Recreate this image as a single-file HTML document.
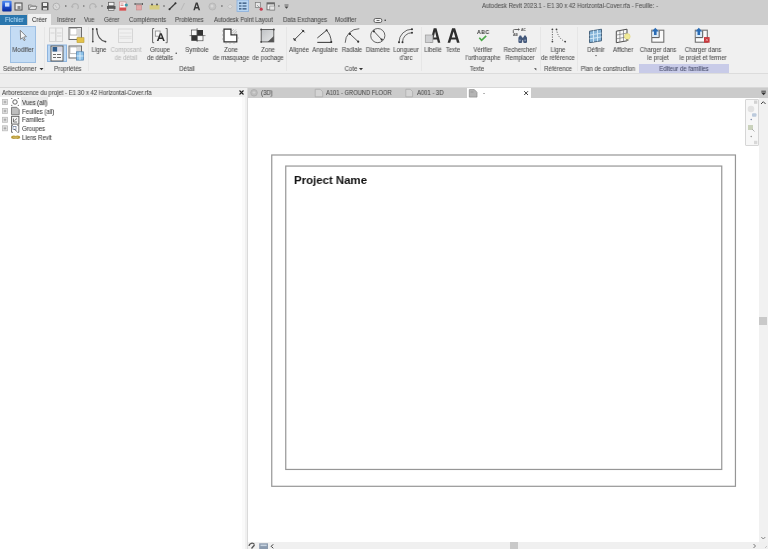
<!DOCTYPE html>
<html><head><meta charset="utf-8">
<style>
*{margin:0;padding:0;box-sizing:border-box}
html,body{width:768px;height:549px;overflow:hidden;background:#fff}
body{position:relative;font-family:"Liberation Sans",sans-serif;font-size:6px;color:#4a4a4a}
.a{position:absolute}
.t{position:absolute;white-space:nowrap;will-change:transform;-webkit-text-stroke:0.06px currentColor;line-height:8px;font-size:6.4px;transform:scaleX(.94);transform-origin:0 50%}
.c{transform:translateX(-50%) scaleX(.94);transform-origin:50% 50%}
svg{position:absolute;overflow:visible}
</style></head><body>
<!-- title bar -->
<div class="a" style="left:0;top:0;width:768px;height:25px;background:#cdcdcd"></div>
<div class="t" style="left:481.5px;top:1.5px;color:#505050;transform:scaleX(.93)">Autodesk Revit 2023.1 - E1 30 x 42 Horizontal-Cover.rfa - Feuille: -</div>


<!-- QAT -->
<svg style="left:0;top:0" width="1" height="1">
 <defs><linearGradient id="rv" x1="0" y1="0" x2="0" y2="1"><stop offset="0" stop-color="#4f8cf0"/><stop offset="0.5" stop-color="#1d4fd0"/><stop offset="1" stop-color="#0a2a9a"/></linearGradient></defs>
 <rect x="2.2" y="0.8" width="9.4" height="10.8" rx="1" fill="url(#rv)"/>
 <rect x="5" y="2.6" width="4.4" height="4" fill="#c8dcff"/>
 <rect x="15" y="3" width="7" height="7" fill="#e8e8e8" stroke="#555" stroke-width="1.1"/>
 <rect x="17.5" y="6" width="3" height="3" fill="#888"/>
 <path d="M28.5 5 h3 l1 1 h3.5 v3.5 h-7.5z" fill="#d0d0d0" stroke="#777" stroke-width="0.8"/>
 <path d="M29 9.5 l1.5 -3 h6.5 l-1.5 3z" fill="#e6e6e6" stroke="#777" stroke-width="0.7"/>
 <rect x="41.5" y="2.3" width="7" height="8" rx="0.6" fill="#555"/>
 <rect x="43" y="3" width="4" height="3" fill="#f0f0f0"/><rect x="43" y="7.8" width="4" height="2" fill="#e0e0e0"/>
 <circle cx="56.3" cy="6.5" r="3.3" fill="#d8d8d8" stroke="#b0b0b0" stroke-width="1"/><path d="M55 5l2 3" stroke="#bbb" stroke-width="0.8"/>
 <circle cx="65.8" cy="6" r="0.8" fill="#555"/>
 <path d="M72 7 a3.2 3.2 0 1 1 5.5 2" fill="none" stroke="#b4b4b4" stroke-width="1.2"/><path d="M70.8 6 l1.4 2.2 l1.8 -1.8z" fill="#b4b4b4"/>
 <circle cx="83.8" cy="6" r="0.8" fill="#666"/>
 <path d="M96 7 a3.2 3.2 0 1 0 -5.5 2" fill="none" stroke="#b4b4b4" stroke-width="1.2"/><path d="M97.2 6 l-1.4 2.2 l-1.8 -1.8z" fill="#b4b4b4"/>
 <circle cx="102" cy="6" r="0.8" fill="#666"/>
 <path d="M107 6 h8.5 v3 h-8.5z" fill="#555"/>
 <rect x="108.5" y="2.3" width="5.5" height="3.5" fill="#f4f4f4" stroke="#555" stroke-width="0.7"/>
 <rect x="108.5" y="8.5" width="5.5" height="1.8" fill="#e8e8e8" stroke="#555" stroke-width="0.6"/>
 <rect x="119.5" y="2" width="6.5" height="8.5" fill="#fafafa" stroke="#d08080" stroke-width="0.6"/><path d="M120.5 4h3M120.5 5.5h3" stroke="#c05050" stroke-width="0.6"/>
 <rect x="119.5" y="7.5" width="6.5" height="3" fill="#d65050"/>
 <circle cx="126.3" cy="5" r="1.6" fill="#3c9aa8"/>
 <path d="M135 3 v2 M142.5 3 v2 M135 4 h7.5" stroke="#555" stroke-width="0.9"/>
 <rect x="136.5" y="5" width="5" height="5" fill="#e4a8a8" stroke="#c08080" stroke-width="0.5"/>
 <path d="M149.5 5 h10 v4.5 h-10z" fill="#d6cc80"/>
 <circle cx="152" cy="4.5" r="1" fill="#555"/><circle cx="157" cy="4.5" r="1" fill="#555"/>
 <circle cx="164" cy="6" r="0.8" fill="#555"/>
 <path d="M169.2 9.5 L175.8 3" stroke="#3c3c3c" stroke-width="1.2"/>
 <circle cx="169.5" cy="9.3" r="1" fill="#333"/><circle cx="175.5" cy="3.3" r="1" fill="#333"/>
 <path d="M181 10 L184.5 3" stroke="#b8b8b8" stroke-width="1"/>
 <path d="M193.3 10.2 L195.8 2.6 H197.6 L200.1 10.2 H198.5 L198 8.4 H195.4 L194.9 10.2 Z M195.8 7.1 H197.6 L196.7 4.3 Z" fill="#383838" fill-rule="evenodd"/>
 <circle cx="212.4" cy="6.5" r="3.5" fill="#c4c4c4" stroke="#b4b4b4" stroke-width="0.8"/><circle cx="212" cy="6" r="1.5" fill="#d8d8d8"/>
 <circle cx="221.9" cy="6" r="0.8" fill="#555"/>
 <path d="M227.8 6.5 L230.2 4 L232.6 6.5 L230.2 9z" fill="#dadada" stroke="#bdbdbd" stroke-width="0.8"/>
 <rect x="237" y="0" width="11.6" height="11.5" fill="#b9d6f2" stroke="#8ab0dc" stroke-width="0.8"/>
 <path d="M239 3.2h2.5M242.5 3.2h4M239 6h2.5M242.5 6h4M239 8.8h2.5M242.5 8.8h4" stroke="#2a4a70" stroke-width="1.2"/>
 <rect x="255.3" y="2.5" width="5" height="5" fill="#e6e6e6" stroke="#777" stroke-width="0.7"/>
 <path d="M257 5 L261 9" stroke="#888" stroke-width="0.7"/>
 <circle cx="261.2" cy="9.2" r="1.6" fill="#c83c50"/>
 <rect x="267" y="2.8" width="7.5" height="7" fill="#f2f2f2" stroke="#6a6a6a" stroke-width="0.9"/>
 <rect x="267" y="2.8" width="7.5" height="1.6" fill="#6a6a6a"/>
 <rect x="269.8" y="6" width="5" height="4" fill="#e4e4e4" stroke="#777" stroke-width="0.6"/>
 <circle cx="278.9" cy="6" r="0.8" fill="#555"/>
 <path d="M284.5 5 h4" stroke="#444" stroke-width="0.8"/><path d="M284.5 6.5 h4 l-2 2.3z" fill="#444"/>
</svg>
<svg style="left:0;top:0" width="1" height="1"><rect x="374" y="18.5" width="7.8" height="4" rx="1.6" fill="#f4f4f4" stroke="#555" stroke-width="0.9"/><path d="M376.5 20.5h3" stroke="#444" stroke-width="0.8"/><circle cx="385.2" cy="20.3" r="0.8" fill="#333"/></svg>

<!-- ribbon tabs -->
<div class="a" style="left:0;top:15px;width:27px;height:9.6px;background:#2a76ad"></div>
<div class="t" style="left:4.5px;top:16px;color:#b4dcf8;transform:scaleX(.98)">Fichier</div>
<div class="a" style="left:28px;top:14px;width:23px;height:11px;background:#f0f0f0"></div>
<div class="t" style="left:32px;top:16px;color:#333">Créer</div>
<div class="t" style="left:57px;top:16px">Insérer</div>
<div class="t" style="left:84px;top:16px">Vue</div>
<div class="t" style="left:104px;top:16px">Gérer</div>
<div class="t" style="left:129px;top:16px">Compléments</div>
<div class="t" style="left:175px;top:16px">Problèmes</div>
<div class="t" style="left:213.5px;top:16px;transform:scaleX(.92)">Autodesk Point Layout</div>
<div class="t" style="left:283px;top:16px">Data Exchanges</div>
<div class="t" style="left:335px;top:16px">Modifier</div>

<!-- ribbon body -->
<div class="a" style="left:0;top:25px;width:768px;height:48px;background:#f0f0f0"></div>
<div class="a" style="left:0;top:73px;width:768px;height:1px;background:#dcdcdc"></div>
<div class="a" style="left:0;top:74px;width:768px;height:13px;background:#ededed"></div>
<div class="a" style="left:0;top:87px;width:768px;height:1px;background:#d8d8d8"></div>


<!-- panel separators -->
<div class="a" style="left:44px;top:27px;width:1px;height:44px;background:#e6e6e6"></div>
<div class="a" style="left:88px;top:27px;width:1px;height:44px;background:#e6e6e6"></div>
<div class="a" style="left:286px;top:27px;width:1px;height:44px;background:#e6e6e6"></div>
<div class="a" style="left:421px;top:27px;width:1px;height:44px;background:#e6e6e6"></div>
<div class="a" style="left:540px;top:27px;width:1px;height:44px;background:#e6e6e6"></div>
<div class="a" style="left:577px;top:27px;width:1px;height:44px;background:#e6e6e6"></div>


<!-- Modifier -->
<div class="a" style="left:10px;top:26px;width:26px;height:37px;background:#c4dcf4;border:1px solid #9dbfe3"></div>
<svg style="left:0;top:0" width="1" height="1"><path d="M20.3 30.3 L20.6 39.4 L22.4 37.6 L24 40.6 L25.2 40 L23.7 37 L26.4 36.6 Z" fill="#f4f6f8" stroke="#707070" stroke-width="0.8"/></svg>
<div class="t c" style="left:23px;top:46px">Modifier</div>

<!-- Propriétés icons -->
<svg style="left:0;top:0" width="1" height="1">
 <g fill="none" stroke="#d4d4d4" stroke-width="1"><rect x="49.5" y="28" width="6" height="13.5"/><rect x="56" y="28" width="6.5" height="13.5"/><path d="M50.5 33h4M57 33h4.5M57 36h4.5"/></g>
 <rect x="69" y="27.5" width="12.5" height="12" fill="#f4f4f4" stroke="#6e6e6e" stroke-width="1"/>
 <rect x="70" y="28.5" width="7" height="6.5" fill="#fff" stroke="#9a9a9a" stroke-width="0.6"/>
 <rect x="77.5" y="28.5" width="3.5" height="10.5" fill="#d8d8d8"/>
 <rect x="70" y="36" width="7" height="2.5" fill="#fff"/>
 <rect x="77" y="37.7" width="7" height="4.8" fill="#e3c24a" stroke="#b89a30" stroke-width="0.6"/>
 <rect x="47.5" y="45" width="19" height="16.5" fill="#bcd8f4" stroke="#8db4df" stroke-width="1"/>
 <rect x="51" y="46" width="12" height="15" fill="#f8f8f8" stroke="#5a5a5a" stroke-width="1"/>
 <rect x="52.5" y="47" width="4.8" height="4.6" fill="#2f5c8c"/>
 <rect x="57.8" y="47" width="4.3" height="4.6" fill="#d6d6e6"/>
 <path d="M53 54.5h3M57 54.5h4M53 57.5h3M57 57.5h4" stroke="#6a6a6a" stroke-width="1"/>
 <rect x="69" y="46" width="12.5" height="12" fill="#f4f4f4" stroke="#6e6e6e" stroke-width="1"/>
 <rect x="70" y="47" width="7" height="6.5" fill="#fff" stroke="#9a9a9a" stroke-width="0.6"/>
 <rect x="77.5" y="47" width="3.5" height="10.5" fill="#d8d8d8"/>
 <rect x="70" y="54.5" width="7" height="2.5" fill="#fff"/>
 <rect x="76.5" y="51.8" width="7" height="8.3" fill="#8ec3ea" stroke="#4f7fae" stroke-width="0.7"/>
 <path d="M80 52v8M76.5 56h7" stroke="#e8f4fc" stroke-width="0.8"/>
</svg>
<div class="t" style="left:3px;top:65px">Sélectionner</div>
<svg style="left:0;top:0" width="1" height="1"><path d="M39.5 68h4l-2 2.3z" fill="#333"/></svg>
<div class="t" style="left:54px;top:65px">Propriétés</div>

<!-- Détail panel -->
<svg style="left:0;top:0" width="1" height="1">
 <path d="M92.8 29v12.6" stroke="#5a5a5a" stroke-width="1.1"/>
 <path d="M96.7 29 Q97.5 40 105.5 41.6" fill="none" stroke="#555" stroke-width="1.2"/>
 <circle cx="92.8" cy="29" r="0.9" fill="#444"/><circle cx="92.8" cy="41.6" r="0.9" fill="#444"/>
 <circle cx="96.7" cy="29" r="0.9" fill="#444"/><circle cx="105.5" cy="41.6" r="0.9" fill="#444"/>
 <rect x="118.5" y="29" width="14" height="13.5" fill="none" stroke="#d6d6d6" stroke-width="1"/>
 <path d="M119.5 36.4h12M119.5 38.2h12M119.5 33h12" stroke="#dcdcdc" stroke-width="0.8"/>
 <path d="M154.2 28.5h-1.6v14.2h1.6M165.6 28.5h1.6v14.2h-1.6" fill="none" stroke="#666" stroke-width="1"/>
 <rect x="155.3" y="31" width="4.8" height="5.2" fill="#f8f8f8" stroke="#888" stroke-width="0.8"/>
 <path d="M156.8 40.9 L159.9 33.2 H161.7 L164.8 40.9 H163.1 L162.4 39 H159.2 L158.5 40.9 Z M159.8 37.5 H161.8 L160.8 34.6 Z" fill="#2e2e2e" fill-rule="evenodd"/>
 <rect x="191.3" y="30" width="5.8" height="5.5" fill="#f6f6f6" stroke="#333" stroke-width="0.6"/>
 <rect x="197.1" y="30" width="5.9" height="5.5" fill="#333"/>
 <rect x="191.3" y="35.5" width="5.8" height="5.3" fill="#333"/>
 <rect x="197.1" y="35.5" width="5.9" height="5.3" fill="#f6f6f6" stroke="#333" stroke-width="0.6"/>
 <path d="M189.5 35.6h16M197.1 28v14" stroke="#444" stroke-width="0.6"/>
 <path d="M224 29.2h7v5.6h5.8v7h-12.8z" fill="#fff" stroke="#2e2e2e" stroke-width="1.2"/><path d="M223 31h-1M223 35h-1M223 39h-1M226 42.8v1M230 42.8v1M234 42.8v1M237.8 38h1" stroke="#888" stroke-width="0.6"/>
 <path d="M232 33.5l4-4M233.5 34.3l3.3-3.3M235.2 34.3l1.8-1.8M232 31l1.8-1.8" stroke="#a8a8a8" stroke-width="0.7"/>
 <defs><linearGradient id="pg" x1="0" y1="0" x2="1" y2="1"><stop offset="0" stop-color="#bfc2c5"/><stop offset="1" stop-color="#e6e7e8"/></linearGradient></defs>
 <rect x="261.2" y="29.5" width="12.6" height="12.4" fill="url(#pg)" stroke="#555" stroke-width="0.9"/>
 <path d="M273.8 36 L273.8 41.9 L267.5 41.9 Z" fill="#555"/>
 <circle cx="261.2" cy="29.5" r="0.9" fill="#444"/><circle cx="273.8" cy="29.5" r="0.9" fill="#444"/><circle cx="261.2" cy="41.9" r="0.9" fill="#444"/>
</svg>
<div class="t c" style="left:99px;top:46px">Ligne</div>
<div class="t c" style="left:126px;top:46px;color:#b8b8b8">Composant</div>
<div class="t c" style="left:126px;top:54px;color:#b8b8b8">de détail</div>
<div class="t c" style="left:160px;top:46px">Groupe</div>
<div class="t c" style="left:160px;top:54px">de détails</div>
<svg style="left:0;top:0" width="1" height="1"><circle cx="176.2" cy="53.3" r="0.7" fill="#333"/></svg>
<div class="t c" style="left:197px;top:46px">Symbole</div>
<div class="t c" style="left:230.5px;top:46px">Zone</div>
<div class="t c" style="left:230.5px;top:54px">de masquage</div>
<div class="t c" style="left:267.5px;top:46px">Zone</div>
<div class="t c" style="left:267.5px;top:54px">de pochage</div>
<div class="t c" style="left:187px;top:65px">Détail</div>

<!-- Cote panel -->
<svg style="left:0;top:0" width="1" height="1">
 <path d="M294.6 39.6 L303.2 31" stroke="#444" stroke-width="1"/>
 <path d="M293 38 L296.2 41.2 M301.6 29.4 L304.8 32.6" stroke="#444" stroke-width="0.7"/>
 <circle cx="294.6" cy="39.6" r="1.1" fill="#333"/><circle cx="303.2" cy="31" r="1.1" fill="#333"/>
 <path d="M317.3 42.4 H331.5" stroke="#444" stroke-width="1.1"/>
 <path d="M317.3 38 L326.6 30.3" stroke="#444" stroke-width="1"/>
 <path d="M326.6 30.3 Q331 35 331.3 42.4" fill="none" stroke="#444" stroke-width="0.9"/>
 <circle cx="326.6" cy="30.3" r="1" fill="#333"/><circle cx="331.3" cy="42" r="1" fill="#333"/>
 <path d="M345.2 42.8 A14 14 0 0 1 359.3 28.7" fill="none" stroke="#555" stroke-width="0.9"/>
 <path d="M349.9 33.9 L358.2 41.7" stroke="#444" stroke-width="0.9"/>
 <circle cx="349.9" cy="33.9" r="1.1" fill="#333"/><circle cx="358.2" cy="41.7" r="1.1" fill="#333"/>
 <circle cx="377.8" cy="35.6" r="7.1" fill="none" stroke="#555" stroke-width="0.9"/>
 <path d="M373.9 31.3 L381.7 39.6" stroke="#444" stroke-width="0.9"/>
 <circle cx="373.9" cy="31.3" r="1.1" fill="#333"/><circle cx="381.7" cy="39.6" r="1.1" fill="#333"/>
 <path d="M399 42.2 A13 13 0 0 1 412 29.2" fill="none" stroke="#555" stroke-width="0.9"/>
 <path d="M402.5 42.2 A9.5 9.5 0 0 1 412 32.7" fill="none" stroke="#555" stroke-width="0.9"/>
 <circle cx="399" cy="42.2" r="1" fill="#333"/><circle cx="402.5" cy="42.2" r="1" fill="#333"/>
 <circle cx="412" cy="29.2" r="1" fill="#333"/><circle cx="412" cy="32.7" r="1" fill="#333"/>
</svg>
<div class="t c" style="left:299px;top:46px">Alignée</div>
<div class="t c" style="left:325px;top:46px">Angulaire</div>
<div class="t c" style="left:351.5px;top:46px">Radiale</div>
<div class="t c" style="left:377.5px;top:46px">Diamètre</div>
<div class="t c" style="left:405.8px;top:46px">Longueur</div>
<div class="t c" style="left:405.8px;top:54px">d'arc</div>
<div class="t c" style="left:351px;top:65px">Cote</div>
<svg style="left:0;top:0" width="1" height="1"><path d="M359 68h4l-2 2.3z" fill="#333"/></svg>

<!-- Texte panel -->
<svg style="left:0;top:0" width="1" height="1">
 <path d="M429.9 42.8 L433.7 28.3 H436.5 L440.3 42.8 H437.9 L437.1 39.6 H433.1 L432.3 42.8 Z M433.7 37.4 H436.5 L435.1 31.6 Z" fill="#2e2e2e" fill-rule="evenodd"/>
 <rect x="425.3" y="35" width="7.6" height="7.6" fill="#cfd0d2" stroke="#9a9a9a" stroke-width="0.7"/>
 <path d="M447.6 42.8 L452.1 28.3 H455.1 L459.6 42.8 H457 L456.1 39.6 H451.1 L450.2 42.8 Z M451.8 37.4 H455.4 L453.6 31.4 Z" fill="#2e2e2e" fill-rule="evenodd"/>
 <path d="M479.3 37.8 L481.6 40.3 L486.2 35.9" fill="none" stroke="#4aa848" stroke-width="1.6"/>
 <path d="M513.3 33 V30.5 Q513.3 29.5 514.5 29.5 H518.5" fill="none" stroke="#555" stroke-width="0.9"/><path d="M518 28.2 L520 29.5 L518 30.8z" fill="#555"/>
 <rect x="518.4" y="36.8" width="3.8" height="6.2" rx="1.2" fill="#44587a"/><rect x="523.2" y="36.8" width="3.8" height="6.2" rx="1.2" fill="#44587a"/>
 <rect x="519.2" y="35.6" width="2.4" height="2.5" rx="0.8" fill="#44587a"/><rect x="523.8" y="35.6" width="2.4" height="2.5" rx="0.8" fill="#44587a"/>
 <rect x="521.5" y="37.6" width="2.4" height="2.6" fill="#44587a"/>
 <rect x="519.3" y="39.6" width="1.4" height="1.6" fill="#8da0bc"/><rect x="524.4" y="39.6" width="1.4" height="1.6" fill="#8da0bc"/>
</svg>
<div class="t" style="left:476.5px;top:28.5px;font:bold 5.4px 'Liberation Sans';line-height:6px;color:#3a3a3a;letter-spacing:0.55px">ABC</div>
<div class="t" style="left:520.8px;top:28.3px;font:bold 3.5px 'Liberation Sans';line-height:4px;color:#555">AC</div>
<div class="t" style="left:512.8px;top:32.6px;font:bold 3.5px 'Liberation Sans';line-height:4px;color:#555">AB</div>
<div class="t c" style="left:432.8px;top:46px">Libellé</div>
<div class="t c" style="left:453.4px;top:46px">Texte</div>
<div class="t c" style="left:483px;top:46px">Vérifier</div>
<div class="t c" style="left:483px;top:54px">l'orthographe</div>
<div class="t c" style="left:520px;top:46px">Rechercher/</div>
<div class="t c" style="left:520px;top:54px">Remplacer</div>
<div class="t c" style="left:477.4px;top:65px">Texte</div>
<svg style="left:0;top:0" width="1" height="1"><path d="M534 68.2 L536.3 68.2 L536.3 70.5z" fill="#444"/></svg>

<!-- Référence -->
<svg style="left:0;top:0" width="1" height="1">
 <path d="M552.4 29 V41.8" stroke="#555" stroke-width="0.9" stroke-dasharray="1.2 1.3"/>
 <path d="M556.5 29 Q557.5 38 565.2 41.8" fill="none" stroke="#555" stroke-width="0.9" stroke-dasharray="1.2 1.3"/>
 <circle cx="552.4" cy="29.3" r="0.9" fill="#444"/><circle cx="552.4" cy="41.6" r="0.9" fill="#444"/>
 <circle cx="556.5" cy="29.3" r="0.9" fill="#444"/><circle cx="565.2" cy="41.6" r="0.9" fill="#444"/>
</svg>
<div class="t c" style="left:558px;top:46px">Ligne</div>
<div class="t c" style="left:558px;top:54px">de référence</div>
<div class="t c" style="left:558px;top:65px">Référence</div>

<!-- Plan de construction -->
<svg style="left:0;top:0" width="1" height="1">
 <path d="M589.5 31.2 L601.5 29.2 L601.5 40.8 L589.5 42.7 Z" fill="#86b4d8" stroke="#48647e" stroke-width="1"/>
 <path d="M593.5 30.5 V42 M597.5 29.9 V41.4 M589.5 35.1 L601.5 33.1 M589.5 38.8 L601.5 36.9" stroke="#d8ecf8" stroke-width="0.9"/>
 <path d="M616.3 31.2 L627 29.2 L627 40.8 L616.3 42.7 Z" fill="#f8f8f8" stroke="#4a4a4a" stroke-width="1"/>
 <path d="M619.9 30.5 V42 M623.5 29.9 V41.4 M616.3 35.1 L627 33.1 M616.3 38.8 L627 36.9" stroke="#777" stroke-width="0.7"/>
 <circle cx="627.3" cy="36.5" r="2.9" fill="#f0ea98" stroke="#dcd070" stroke-width="0.5"/>
 <rect x="626" y="39.2" width="2.4" height="1.8" fill="#8a8a7a"/>
 <circle cx="596" cy="55.6" r="0.7" fill="#333"/>
</svg>
<div class="t c" style="left:595.6px;top:46px">Définir</div>
<div class="t c" style="left:622.5px;top:46px">Afficher</div>
<div class="t c" style="left:608px;top:65px">Plan de construction</div>

<!-- Editeur de familles -->
<div class="a" style="left:639px;top:64px;width:90px;height:9px;background:#c8cbe8"></div>
<svg style="left:0;top:0" width="1" height="1">
 <rect x="651.8" y="30.2" width="12" height="12" fill="#fafafa" stroke="#707070" stroke-width="1.1"/>
 <path d="M652.3 30.7 H659 V37.3 H652.3z" fill="#dcebf8"/>
 <path d="M659.2 30.5 V37.6 H652" fill="none" stroke="#555" stroke-width="1"/>
 <path d="M654 35 V31.5 H651.8 L655.3 27.7 L658.8 31.5 H656.6 V35z" fill="#2a6cb5"/>
 <rect x="695.3" y="30.2" width="12" height="12" fill="#fafafa" stroke="#707070" stroke-width="1.1"/>
 <path d="M695.8 30.7 H702.5 V37.3 H695.8z" fill="#dcebf8"/>
 <path d="M702.7 30.5 V37.6 H695.5" fill="none" stroke="#555" stroke-width="1"/>
 <path d="M697.5 35 V31.5 H695.3 L698.8 27.7 L702.3 31.5 H700.1 V35z" fill="#2a6cb5"/>
 <rect x="704" y="37.1" width="5.6" height="5.6" fill="#c8363a"/>
 <path d="M705.6 38.7 L708 41.1 M708 38.7 L705.6 41.1" stroke="#f4c4c4" stroke-width="0.6"/>
</svg>
<div class="t c" style="left:658px;top:46px">Charger dans</div>
<div class="t c" style="left:658px;top:54px">le projet</div>
<div class="t c" style="left:702.8px;top:46px">Charger dans</div>
<div class="t c" style="left:702.8px;top:54px">le projet et fermer</div>
<div class="t c" style="left:684px;top:65px;color:#454a68">Editeur de familles</div>

<!-- project browser -->
<div class="a" style="left:0;top:88px;width:246px;height:9px;background:#f0f0f0"></div>
<div class="t" style="left:2px;top:89px;color:#444;transform:scaleX(.93)">Arborescence du projet - E1 30 x 42 Horizontal-Cover.rfa</div>
<div class="a" style="left:0;top:97px;width:246px;height:452px;background:#fff"></div>
<div class="a" style="left:242px;top:97px;width:3px;height:452px;background:#fafafa"></div>
<div class="a" style="left:245px;top:88px;width:2px;height:461px;background:#f0f0f0"></div>
<div class="a" style="left:247px;top:88px;width:1px;height:461px;background:#dadada"></div>


<!-- tree -->
<div class="a" style="left:21px;top:97px;width:26.5px;height:9px;background:#ececec"></div>
<svg style="left:0;top:0" width="1" height="1">
 <g fill="#e2e2e2" stroke="#bcbcbc" stroke-width="0.8">
  <rect x="2.5" y="99.5" width="5" height="5"/><rect x="2.5" y="108.5" width="5" height="5"/><rect x="2.5" y="117.3" width="5" height="5"/><rect x="2.5" y="125.8" width="5" height="5"/>
 </g>
 <g stroke="#888" stroke-width="0.6"><path d="M3.6 102h2.8M5 100.6v2.8M3.6 111h2.8M5 109.6v2.8M3.6 119.8h2.8M5 118.4v2.8M3.6 128.3h2.8M5 126.9v2.8"/></g>
 <circle cx="15" cy="102" r="2.2" fill="none" stroke="#555" stroke-width="0.9"/>
 <g fill="#555"><circle cx="11.8" cy="98.5" r="0.6"/><circle cx="18.3" cy="98.5" r="0.6"/><circle cx="11.8" cy="105.3" r="0.6"/><circle cx="18.3" cy="105.3" r="0.6"/></g>
 <path d="M11.5 107.3 h5.3 l2.4 2.4 v5 h-7.7z" fill="#bdbdbd" stroke="#6a6a6a" stroke-width="0.8"/>
 <rect x="11.6" y="116.3" width="7.3" height="7.8" fill="#f4f4f4" stroke="#555" stroke-width="0.9"/>
 <path d="M13.5 118.5 v3.5 h3.5 M14.5 120.5 l2.5 -2" fill="none" stroke="#555" stroke-width="0.8"/>
 <path d="M13 125.3 h-1.5 v7 h1.5 M17.3 125.3 h1.5 v7 h-1.5" fill="none" stroke="#555" stroke-width="0.8"/>
 <rect x="13" y="126.5" width="3" height="3" fill="none" stroke="#6a7a9a" stroke-width="0.7"/>
 <path d="M14 129 l3 2.5" stroke="#555" stroke-width="0.8"/>
 <ellipse cx="13.8" cy="137.2" rx="2.8" ry="1.8" fill="#b89a38"/>
 <ellipse cx="17.5" cy="137.2" rx="2.8" ry="1.8" fill="#b89a38"/>
 <path d="M13 137.2h5" stroke="#e0cc80" stroke-width="0.7"/>
</svg>
<div class="t" style="left:22px;top:98.8px;color:#3a3a3a">Vues (all)</div>
<div class="t" style="left:22px;top:107.8px;color:#3a3a3a">Feuilles (all)</div>
<div class="t" style="left:22px;top:116.3px;color:#3a3a3a">Familles</div>
<div class="t" style="left:22px;top:124.6px;color:#3a3a3a">Groupes</div>
<div class="t" style="left:22px;top:134px;color:#3a3a3a">Liens Revit</div>
<svg style="left:0;top:0" width="1" height="1"><path d="M239.5 90.5 L243.5 94.5 M243.5 90.5 L239.5 94.5" stroke="#222" stroke-width="1.1"/></svg>

<!-- view tabs -->
<div class="a" style="left:248px;top:88px;width:520px;height:10px;background:#cbcbcb"></div>
<div class="a" style="left:467px;top:88px;width:64px;height:10px;background:#fff"></div>
<div class="t" style="left:261px;top:89px">(3D)</div>
<div class="t" style="left:326px;top:89px;transform:scaleX(.9)">A101 - GROUND FLOOR</div>
<div class="t" style="left:416.5px;top:89px;transform:scaleX(.92)">A001 - 3D</div>
<div class="t" style="left:483px;top:89px">-</div>


<svg style="left:0;top:0" width="1" height="1">
 <circle cx="254" cy="92.8" r="3.3" fill="#bdbdbd" stroke="#a8a8a8" stroke-width="0.7"/>
 <path d="M252.5 92.5 h3 M254 91 v3" stroke="#d8d8d8" stroke-width="0.6"/>
 <path d="M315.2 89.3 h5 l2.5 2.5 v5 h-7.5z" fill="#d4d4d4" stroke="#a8a8a8" stroke-width="0.7"/>
 <path d="M405.8 89.3 h4.5 l2.3 2.3 v5.2 h-6.8z" fill="#d4d4d4" stroke="#a8a8a8" stroke-width="0.7"/>
 <path d="M469.3 89.6 h5 l2.7 2.7 v4.8 h-7.7z" fill="#b4b4b4" stroke="#8a8a8a" stroke-width="0.7"/>
 <path d="M470.5 92h3" stroke="#888" stroke-width="0.6"/>
 <path d="M524.2 91.2 L528 95 M528 91.2 L524.2 95" stroke="#2a2a2a" stroke-width="0.9"/>
 <path d="M761.3 91.2 h4.6" stroke="#333" stroke-width="0.9"/><path d="M761 92.6 h5.2 l-2.6 2.6z" fill="#333"/>
</svg>

<!-- sheet -->
<svg style="left:0;top:0" width="1" height="1"><g fill="none" stroke="#969696" stroke-width="1.2"><rect x="271.75" y="155" width="463.7" height="331.3"/><rect x="285.75" y="166.05" width="436" height="303.4"/></g></svg>
<div class="t" style="left:294px;top:173.4px;font:bold 11.6px 'Liberation Sans';line-height:14px;color:#161616;transform:scaleX(.985)">Project Name</div>

<!-- scrollbars -->
<div class="a" style="left:759px;top:98px;width:9px;height:444px;background:#f1f1f1"></div>
<div class="a" style="left:759px;top:316.5px;width:7.5px;height:8.5px;background:#c9c9c9"></div>
<div class="a" style="left:248px;top:542px;width:520px;height:7px;background:#f0f0f0"></div>
<div class="a" style="left:510px;top:542px;width:8px;height:7px;background:#c9c9c9"></div>


<!-- nav bar + scroll arrows + view bar -->
<div class="a" style="left:744.5px;top:99px;width:14px;height:46.5px;background:#f7f7f7;border:1px solid #d6d6d6;border-radius:1px"></div>
<svg style="left:0;top:0" width="1" height="1">
 <rect x="754" y="100.5" width="3.3" height="3.3" fill="#d2d2d2"/>
 <rect x="754" y="140.8" width="3.3" height="3.3" fill="#d8d8d8"/>
 <circle cx="751" cy="109" r="3.3" fill="#e2e2e2"/>
 <rect x="752" y="113.3" width="4.5" height="3.5" rx="1" fill="#bccadc"/>
 <circle cx="751.2" cy="119.5" r="0.7" fill="#6a7aa0"/>
 <rect x="748" y="125" width="5" height="5" fill="#cad2bc"/>
 <path d="M752 129 l2.5 2.5" stroke="#aaa" stroke-width="0.9"/>
 <circle cx="751.2" cy="136.5" r="0.7" fill="#888"/>
 <path d="M761 104 l2.3 -2.3 l2.3 2.3" fill="none" stroke="#444" stroke-width="1"/>
 <path d="M761.3 537 l2 2 l2 -2" fill="none" stroke="#777" stroke-width="0.9"/>
 <path d="M753.5 544 l2 2 l-2 2" fill="none" stroke="#666" stroke-width="0.9"/>
 <path d="M765 548 l2 -2" stroke="#bbb" stroke-width="0.8"/>
 <path d="M249 546 a3 3 0 0 1 5.5 -1.5 M251.5 548.5 l3 -3.5" fill="none" stroke="#555" stroke-width="1.3"/>
 <rect x="259.2" y="543.3" width="8.8" height="6" fill="#8a9aae"/>
 <rect x="260.5" y="544.6" width="6.2" height="1.5" fill="#c8d4e0"/>
 <path d="M273.2 544.3 l-2 2 l2 2" fill="none" stroke="#333" stroke-width="1"/>
</svg>

</body></html>
